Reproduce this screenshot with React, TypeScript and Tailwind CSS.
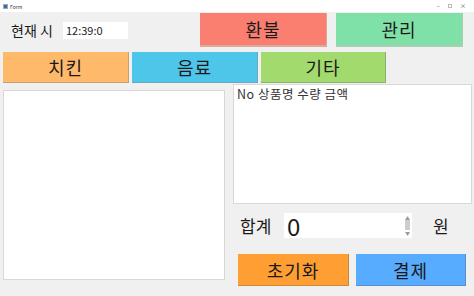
import React from "react";

const font = { fontFamily: '"Noto Sans CJK KR", "Noto Sans", sans-serif' };

export default function App() {
  return (
    <div className="w-[474px] h-[296px] bg-[#f0f0f0] flex flex-col overflow-hidden text-[#1a1a1a]" style={font}>
      {/* title bar */}
      <div className="h-[12px] bg-white flex items-center shrink-0">
        <div className="ml-[3px] w-[5px] h-[5px] bg-[#3a6ea5] border border-[#9ab]" />
        <span className="ml-[2px] text-[5px] leading-none text-[#333]">Form</span>
        <div className="ml-auto flex items-center gap-[8px] mr-[8px] text-[6px] leading-none text-[#555]">
          <span>–</span>
          <span className="w-[4px] h-[4px] border border-[#bbb]" />
          <span>×</span>
        </div>
      </div>

      {/* row 1 */}
      <div className="h-[35px] flex items-start mt-[1px] shrink-0">
        <span className="ml-[11px] w-[42px] mt-[9px] text-[14px] leading-[16px] whitespace-nowrap">현재 시</span>
        <div className="ml-[10px] mt-[9px] w-[65px] h-[17px] bg-white flex items-center pl-[3px] text-[11px] leading-none">12:39:0</div>
        <button className="ml-[72px] w-[127px] h-[34px] bg-[#fb7f70] border-b-2 border-r border-[#d9a99a] text-[18px] leading-none tracking-[1px]">환불</button>
        <button className="ml-[9px] w-[127px] h-[34px] bg-[#7fe0a8] border-b-2 border-r border-[#a8cfb4] text-[18px] leading-none tracking-[1px]">관리</button>
      </div>

      {/* row 2 */}
      <div className="h-[31px] flex mt-[4px] shrink-0">
        <button className="ml-[3px] w-[126px] h-[31px] bg-[#ffb96b] border-b border-r border-[#c9a070] text-[18px] leading-none tracking-[1px]">치킨</button>
        <button className="ml-[3px] w-[126px] h-[31px] bg-[#4ec6ea] border-b border-r border-[#6aa8c0] text-[18px] leading-none tracking-[1px]">음료</button>
        <button className="ml-[3px] w-[125px] h-[31px] bg-[#a2da6e] border-b border-r border-[#8ab070] text-[18px] leading-none tracking-[1px]">기타</button>
      </div>

      {/* body */}
      <div className="flex mt-[1px]">
        <div className="ml-[3px] mt-[6px] w-[222px] h-[190px] bg-white border border-[#d8d8d8]" />
        <div className="ml-[8px] w-[239px] flex flex-col">
          <div className="h-[120px] bg-white border border-[#d8d8d8] px-[3px] pt-[2px] text-[12.5px] leading-[14px] tracking-[0.5px] text-[#333] whitespace-nowrap">
            No 상품명 수량 금액
          </div>
          <div className="flex items-center mt-[9px] h-[25px]">
            <span className="ml-[7px] w-[35px] text-[17px] leading-none whitespace-nowrap">합계</span>
            <div className="ml-[9px] w-[128px] h-[25px] bg-white flex items-center relative">
              <span className="ml-[3px] text-[24px] leading-none">0</span>
              <div className="absolute right-[2px] top-[2px] flex flex-col items-center">
                <span className="text-[5px] leading-[5px] text-[#999]">▲</span>
                <span className="w-[5px] h-[10px] bg-[#cdcdcd]" />
                <span className="text-[5px] leading-[5px] text-[#999]">▼</span>
              </div>
            </div>
            <span className="ml-[21px] text-[17px] leading-none">원</span>
          </div>
          <div className="flex mt-[16px]">
            <button className="ml-[5px] w-[111px] h-[32px] bg-[#ff9f33] border-b border-r border-[#c98a40] text-[18px] leading-none tracking-[1px]">초기화</button>
            <button className="ml-[7px] w-[110px] h-[32px] bg-[#58acff] border-b border-r border-[#5a8ccf] text-[18px] leading-none tracking-[1px]">결제</button>
          </div>
        </div>
      </div>
    </div>
  );
}
